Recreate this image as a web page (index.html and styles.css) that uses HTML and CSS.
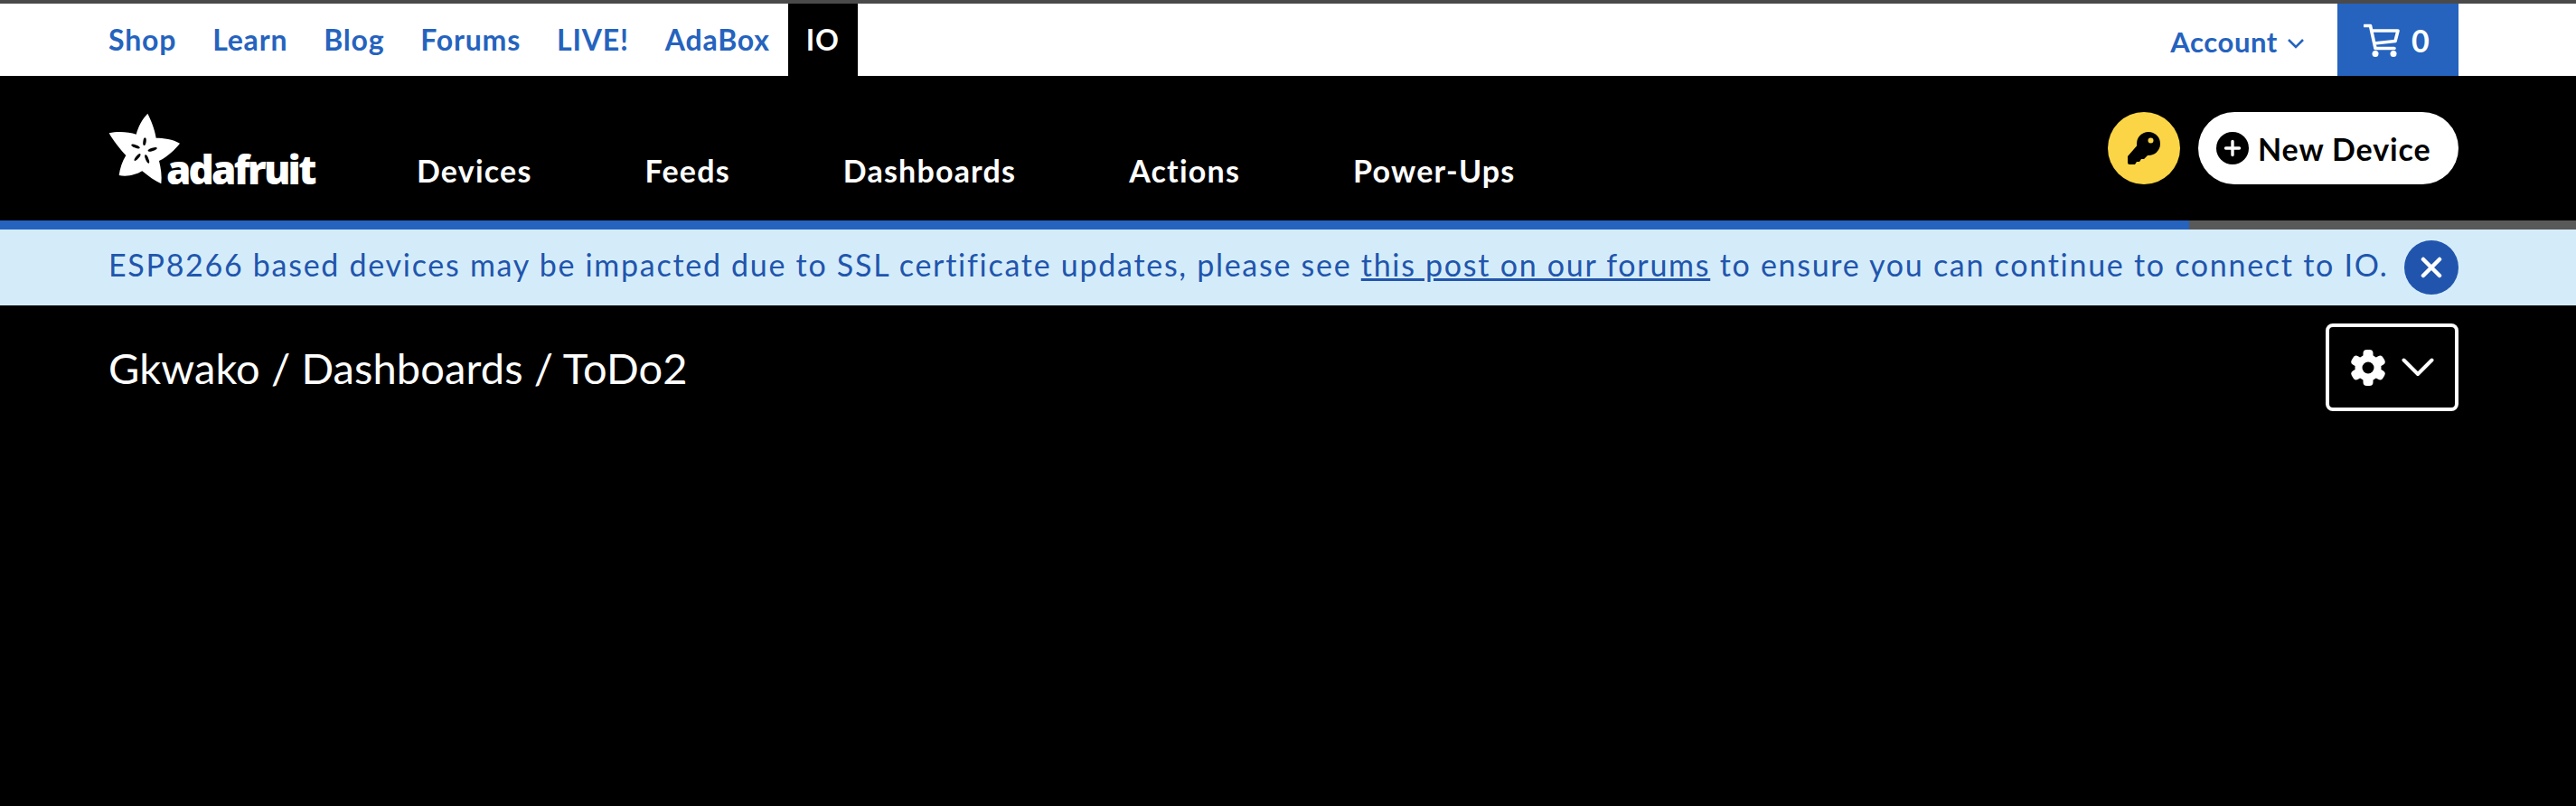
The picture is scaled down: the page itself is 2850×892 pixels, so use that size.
FILE: index.html
```html
<!DOCTYPE html>
<html lang="en">
<head>
<meta charset="utf-8">
<title>ToDo2</title>
<link rel="stylesheet" href="styles.css">
</head>
<body>
<div class="topline"></div>
<header class="topbar">
  <nav class="topnav">
    <a href="#">Shop</a><a href="#">Learn</a><a href="#">Blog</a><a href="#">Forums</a><a href="#">LIVE!</a><a href="#">AdaBox</a><a href="#" class="active">IO</a>
  </nav>
  <div class="topright">
    <a href="#" class="account">Account
      <svg class="caret" viewBox="0 0 20 12" width="20" height="12"><path d="M2 2l8 8 8-8" fill="none" stroke="#2563be" stroke-width="2.600"/></svg>
    </a>
    <a href="#" class="cart">
      <svg viewBox="0 0 41 37" width="41" height="37"><path d="M1 2.500h6.500l5.500 25h21M9 8h29l-3 11.500-23 2.500" fill="none" stroke="#fff" stroke-width="3.600" stroke-linecap="round" stroke-linejoin="round"/><circle cx="13" cy="33.500" r="3.500" fill="#fff"/><circle cx="33" cy="33.500" r="3.500" fill="#fff"/></svg>
      <span>0</span>
    </a>
  </div>
</header>
<div class="mainbar">
  <div class="brand">
    <svg class="flower" viewBox="58 45 240 240" width="80" height="80">
      <path fill="#fff" d="M188 47C200 70 212 100 216 128C240 128 272 132 295 146C280 165 255 190 226 204C232 228 236 255 233 280C212 270 190 255 170 238C150 250 120 258 93 252C96 230 104 205 116 186C96 165 72 135 60 112C90 105 125 108 150 116C156 92 170 65 188 47Z"/>
      <g fill="#000">
        <ellipse cx="178" cy="140" rx="5" ry="13" transform="rotate(8 178 140)"/>
        <ellipse cx="148" cy="156" rx="15" ry="5" transform="rotate(20 148 156)"/>
        <ellipse cx="204" cy="166" rx="16" ry="5" transform="rotate(-18 204 166)"/>
        <ellipse cx="154" cy="192" rx="5" ry="15" transform="rotate(40 154 192)"/>
        <ellipse cx="186" cy="198" rx="5" ry="15" transform="rotate(-22 186 198)"/>
      </g>
    </svg>
    <span class="wordmark">adafruit</span>
  </div>
  <nav class="mainnav">
    <a href="#">Devices</a><a href="#">Feeds</a><a href="#">Dashboards</a><a href="#">Actions</a><a href="#">Power-Ups</a>
  </nav>
  <div class="actions">
    <a href="#" class="keybtn">
      <svg viewBox="0 0 36 37" width="36" height="37">
        <circle cx="23" cy="13" r="13" fill="#000"/>
        <path fill="#000" d="M13 12L0 27v7a2 2 0 0 0 2 2h6l2-3h3l2-3h3l5-5z"/>
        <circle cx="25.500" cy="9.500" r="3" fill="#fbd545"/>
      </svg>
    </a>
    <a href="#" class="newbtn">
      <svg viewBox="0 0 36 36" width="36" height="36"><circle cx="18" cy="18" r="18" fill="#000"/><path d="M18 10.500v15M10.500 18h15" stroke="#fff" stroke-width="3.400" stroke-linecap="round"/></svg>
      <span>New Device</span>
    </a>
  </div>
</div>
<div class="progress"><div class="fill"></div></div>
<div class="notice">
  <p>ESP8266 based devices may be impacted due to SSL certificate updates, please see <a href="#">this post on our forums</a> to ensure you can continue to connect to IO.</p>
  <button class="close" type="button" aria-label="Close"><svg viewBox="0 0 24 24" width="24" height="24"><path d="M3 3l18 18M21 3L3 21" stroke="#fff" stroke-width="4.500" stroke-linecap="round"/></svg></button>
</div>
<div class="crumbbar">
  <h1>Gkwako / Dashboards / ToDo2</h1>
  <button class="settings" type="button" aria-label="Settings">
    <svg viewBox="-20 -20 40 40" width="40" height="40">
      <g fill="#fff">
        <circle r="14.500"/>
        <rect x="-5.500" y="-20" width="11" height="40" rx="4"/>
        <rect x="-5.500" y="-20" width="11" height="40" rx="4" transform="rotate(60)"/>
        <rect x="-5.500" y="-20" width="11" height="40" rx="4" transform="rotate(120)"/>
      </g>
      <circle r="6.500" fill="#000"/>
    </svg>
    <svg viewBox="0 0 36 21" width="36" height="21"><path d="M2.500 2.500L18 18 33.500 2.500" fill="none" stroke="#fff" stroke-width="4" stroke-linecap="round" stroke-linejoin="round"/></svg>
  </button>
</div>
</body>
</html>
```
FILE: styles.css
```css
* { box-sizing: border-box; }
html, body { margin: 0; padding: 0; }
body { background: #000; color: #fff; font-family: Lato, "Noto Sans", sans-serif; height: 892px; overflow: hidden; }
a { text-decoration: none; color: inherit; }
.topline { height: 4px; background: #4a4a4a; }
.topbar { height: 80px; background: #fff; display: flex; justify-content: space-between; padding: 0 130px 0 120px; }
.topnav { display: flex; align-items: stretch; }
.topnav a { display: flex; align-items: center; color: #2563be; font-size: 32px; font-weight: 700; letter-spacing: 0.800px; margin-right: 40px; padding-bottom: 2px; }
.topnav a.active { background: #000; color: #fff; margin: 0 0 0 -20px; padding: 0 20px 2px; }
.topright { display: flex; align-items: stretch; }
.account { display: flex; align-items: center; gap: 10px; color: #2563be; font-size: 31px; font-weight: 700; letter-spacing: 0.600px; margin-right: 36px; padding-top: 3px; }
.caret { margin-top: 5px; }
.cart { display: flex; align-items: center; gap: 12px; width: 134px; padding-left: 29px; background: #2563be; color: #fff; font-size: 34px; font-weight: 700; }
.mainbar { height: 160px; display: flex; align-items: flex-start; padding: 41px 130px 0 120px; }
.brand { display: flex; align-items: flex-end; width: 341px; height: 80px; flex: none; }
.flower { flex: none; }
.wordmark { font-family: "Open Sans", sans-serif; font-weight: 800; font-size: 44px; line-height: 36px; letter-spacing: -2.800px; margin-left: -16px; }
.mainnav { display: flex; gap: 125px; margin-top: 42px; }
.mainnav a { font-size: 34px; font-weight: 700; letter-spacing: 1.200px; line-height: 44px; }
.actions { margin-left: auto; display: flex; align-items: center; gap: 20px; margin-top: -1px; }
.keybtn { width: 80px; height: 80px; border-radius: 50%; background: #fbd545; display: flex; align-items: center; justify-content: center; }
.newbtn { height: 80px; width: 288px; border-radius: 40px; background: #fff; color: #000; display: flex; align-items: center; gap: 10px; padding-left: 20px; font-size: 34px; font-weight: 700; letter-spacing: 0.900px; }
.progress { height: 10px; background: #595959; }
.fill { width: 2422px; height: 100%; background: #2563be; }
.notice { height: 84px; background: #d4ecf9; color: #2155ad; display: flex; align-items: center; justify-content: space-between; padding: 0 130px 0 120px; }
.notice p { margin: 0 0 8px; font-size: 34px; letter-spacing: 1.720px; white-space: nowrap; }
.notice a { text-decoration: underline; }
.close { width: 60px; height: 60px; border: 0; border-radius: 50%; background: #2155ad; padding: 0; display: flex; align-items: center; justify-content: center; }
.crumbbar { display: flex; align-items: flex-start; justify-content: space-between; padding: 20px 130px 0 120px; }
.crumbbar h1 { margin: 21px 0 0; font-size: 47px; font-weight: 400; line-height: 56px; letter-spacing: 0.100px; }
.settings { width: 147px; height: 97px; background: #000; border: 4px solid #fff; border-radius: 8px; display: flex; align-items: center; justify-content: center; gap: 17px; padding: 0; }
```
